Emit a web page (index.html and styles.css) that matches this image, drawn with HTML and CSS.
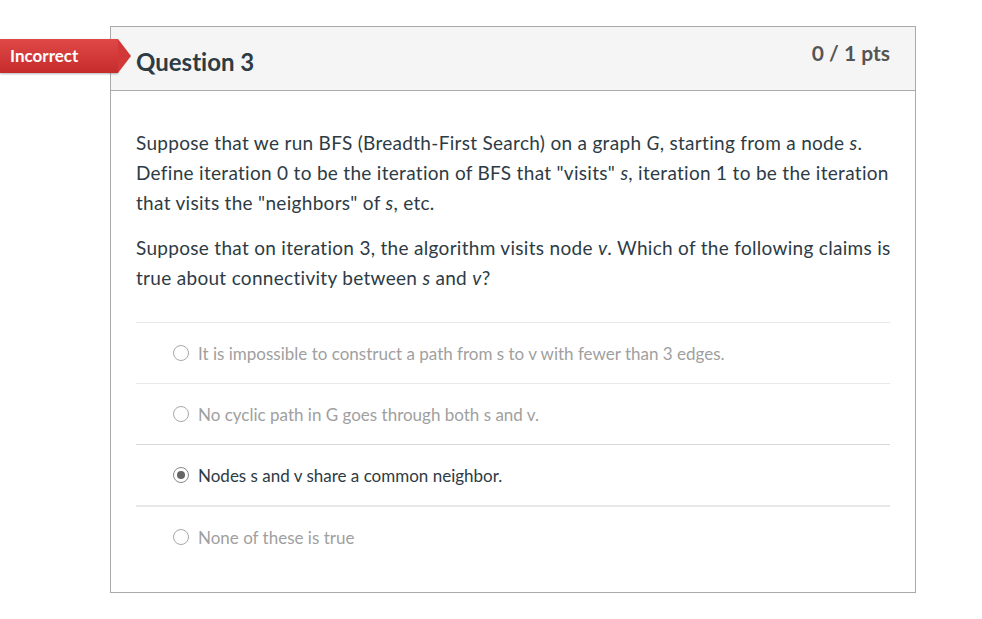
FILE: index.html
```html
<!DOCTYPE html>
<html lang="en">
<head>
  <meta charset="UTF-8" />
  <title>Question 3</title>
  <link rel="stylesheet" href="styles.css">
</head>
<body>
  <div class="question-wrap">
    <div class="question-card">
      <div class="answer-flag">Incorrect</div>
      <div class="question-header">
        <h2>Question 3</h2>
        <span class="points">0 / 1 pts</span>
      </div>
      <div class="question-body">
        <p>Suppose that we run BFS (Breadth-First Search) on a graph <i>G</i>, starting from a node <i>s</i>. Define iteration 0 to be the iteration of BFS that "visits" <i>s</i>, iteration 1 to be the iteration that visits the "neighbors" of <i>s</i>, etc.</p>
        <p>Suppose that on iteration 3, the algorithm visits node <i>v</i>. Which of the following claims is true about connectivity between <i>s</i> and <i>v</i>?</p>
        <div class="answers">
          <div class="answer">
            <span class="radio"></span>
            <span class="label">It is impossible to construct a path from s to v with fewer than 3 edges.</span>
          </div>
          <div class="answer">
            <span class="radio"></span>
            <span class="label">No cyclic path in G goes through both s and v.</span>
          </div>
          <div class="answer selected">
            <span class="radio"></span>
            <span class="label">Nodes s and v share a common neighbor.</span>
          </div>
          <div class="answer">
            <span class="radio"></span>
            <span class="label">None of these is true</span>
          </div>
        </div>
      </div>
    </div>
  </div>
</body>
</html>
```

FILE: styles.css
```css
body {
  margin: 0;
  padding: 0;
  font-family: Lato, "Open Sans", sans-serif;
  font-variant-ligatures: no-common-ligatures;
  background: #fff;
  color: #2d3b45;
}

.question-wrap {
  padding: 26px 0 0 110px;
}

.question-card {
  position: relative;
  width: 806px;
  height: 567px;
  border: 1px solid #aaa;
  box-sizing: border-box;
}

.answer-flag {
  position: absolute;
  left: -111px;
  top: 12px;
  width: 118px;
  height: 34px;
  line-height: 34px;
  padding-left: 10px;
  box-sizing: border-box;
  background: linear-gradient(#e04848, #c52b2b);
  color: #fff;
  font-weight: bold;
  font-size: 17px;
  box-shadow: 0 1px 2px rgba(0, 0, 0, 0.3);
}

.answer-flag::after {
  content: "";
  position: absolute;
  right: -13px;
  top: 0;
  border-top: 17px solid transparent;
  border-bottom: 17px solid transparent;
  border-left: 13px solid #d23838;
}

.question-header {
  display: flex;
  justify-content: space-between;
  align-items: center;
  height: 63px;
  padding: 0 25px;
  background: #f5f5f5;
  border-bottom: 1px solid #aaa;
}

.question-header h2 {
  margin: 6px 0 0;
  font-size: 24px;
  font-weight: bold;
  color: #2d3b45;
}

.points {
  font-size: 21px;
  font-weight: bold;
  color: #555;
  margin-top: -12px;
}

.question-body {
  padding: 37px 25px 0;
}

.question-body p {
  margin: 0 -8px 15px 0;
  font-size: 19px;
  line-height: 30px;
  letter-spacing: 0.3px;
}

.answers {
  margin-top: 29px;
}

.answer {
  display: flex;
  align-items: center;
  height: 60px;
  border-top: 1px solid #e8e8e8;
  padding-left: 37px;
  font-size: 17px;
  color: #a0a0a0;
}

.radio {
  position: relative;
  width: 16px;
  height: 16px;
  border: 1px solid #a8a8a8;
  border-radius: 50%;
  background: #fff;
  margin-right: 9px;
  box-sizing: border-box;
}

.answer.selected {
  color: #2d3b45;
  border-top-color: #d8d8d8;
  border-bottom: 1px solid #e8e8e8;
}

.answer.selected .radio {
  border-color: #888;
}

.answer.selected .radio::after {
  content: "";
  position: absolute;
  left: 3px;
  top: 3px;
  width: 8px;
  height: 8px;
  border-radius: 50%;
  background: #666;
}
```
